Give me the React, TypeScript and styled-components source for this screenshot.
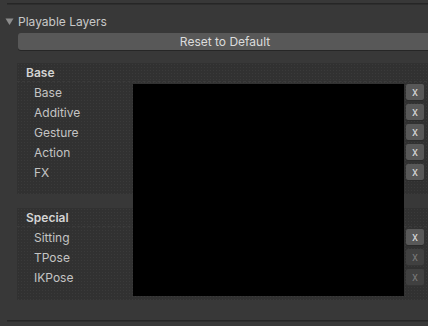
import React from "react";
import styled, { createGlobalStyle } from "styled-components";

const Global = createGlobalStyle`
  html, body { margin: 0; padding: 0; background: #383838; overflow: hidden; }
  body { font-family: Inter, "Noto Sans", "Liberation Sans", sans-serif; }
`;

const Page = styled.div`
  position: relative;
  width: 432px;
  height: 326px;
  background: #383838;
  overflow: hidden;
  display: flex;
  flex-direction: column;
`;

const Rule = styled.div<{ $top: number }>`
  margin-top: ${(p) => p.$top}px;
  margin-left: 7px;
  height: 1px;
  background: #262626;
  box-shadow: 0 1px 0 #2e2e2e;
`;

const Foldout = styled.div`
  display: flex;
  align-items: center;
  height: 16px;
  margin-top: 9px;
  gap: 4px;
  padding-left: 5px;
  color: #c8c8c8;
  font-size: 12px;
`;

const Arrow = styled.svg`
  width: 9px;
  height: 9px;
  flex: none;
`;

const ResetButton = styled.button`
  margin: 4px 0 0 18px;
  height: 17px;
  width: 414px;
  border: none;
  border-radius: 3px;
  background: #585858;
  box-shadow: 0 1px 0 #262626;
  color: #dcdcdc;
  font-family: inherit;
  font-size: 12px;
  padding: 0;
`;

const Panel = styled.div<{ $top: number; $bottomPad: number }>`
  margin: ${(p) => p.$top}px 0 0 17px;
  padding-bottom: ${(p) => p.$bottomPad}px;
  background-color: #313131;
  background-image: radial-gradient(rgba(255, 255, 255, 0.045) 0.6px, transparent 0.7px);
  background-size: 3px 3px;
  display: flex;
  flex-direction: column;
`;

const Header = styled.div`
  height: 18px;
  display: flex;
  align-items: center;
  padding-left: 9px;
  color: #d4d4d4;
  font-size: 12px;
  font-weight: 600;
  border-bottom: 1px dashed rgba(255, 255, 255, 0.05);
`;

const Row = styled.div`
  height: 20px;
  display: flex;
  align-items: center;
  justify-content: space-between;
  padding-left: 17px;
  padding-right: 8px;
  color: #c4c4c4;
  font-size: 12px;
`;

const XButton = styled.div<{ $disabled?: boolean }>`
  width: 18px;
  height: 16px;
  border-radius: 2px;
  display: flex;
  align-items: center;
  justify-content: center;
  font-size: 11px;
  background: ${(p) => (p.$disabled ? "#404040" : "#585858")};
  color: ${(p) => (p.$disabled ? "#7a7a7a" : "#e0e0e0")};
  box-shadow: 0 1px 0 ${(p) => (p.$disabled ? "#353535" : "#2a2a2a")};
`;

const Preview = styled.div`
  position: absolute;
  left: 133px;
  top: 84px;
  width: 271px;
  height: 212px;
  background: #000;
`;

type Item = { name: string; disabled?: boolean };

const base: Item[] = [
  { name: "Base" },
  { name: "Additive" },
  { name: "Gesture" },
  { name: "Action" },
  { name: "FX" },
];

const special: Item[] = [
  { name: "Sitting" },
  { name: "TPose", disabled: true },
  { name: "IKPose", disabled: true },
];

function Section({ title, items, top, pad }: { title: string; items: Item[]; top: number; pad: number }) {
  return (
    <Panel $top={top} $bottomPad={pad}>
      <Header>{title}</Header>
      {items.map((it) => (
        <Row key={it.name}>
          <span>{it.name}</span>
          <XButton $disabled={it.disabled}>x</XButton>
        </Row>
      ))}
    </Panel>
  );
}

export default function App() {
  return (
    <>
      <Global />
      <Page>
        <Rule $top={3} />
        <Foldout>
          <Arrow viewBox="0 0 9 9">
            <path d="M0.5 1.5 L8.5 1.5 L4.5 8 Z" fill="#8c8c8c" />
          </Arrow>
          <span>Playable Layers</span>
        </Foldout>
        <ResetButton>Reset to Default</ResetButton>
        <Section title="Base" items={base} top={13} pad={12} />
        <Section title="Special" items={special} top={14} pad={13} />
        <Rule $top={20} />
        <Preview />
      </Page>
    </>
  );
}
